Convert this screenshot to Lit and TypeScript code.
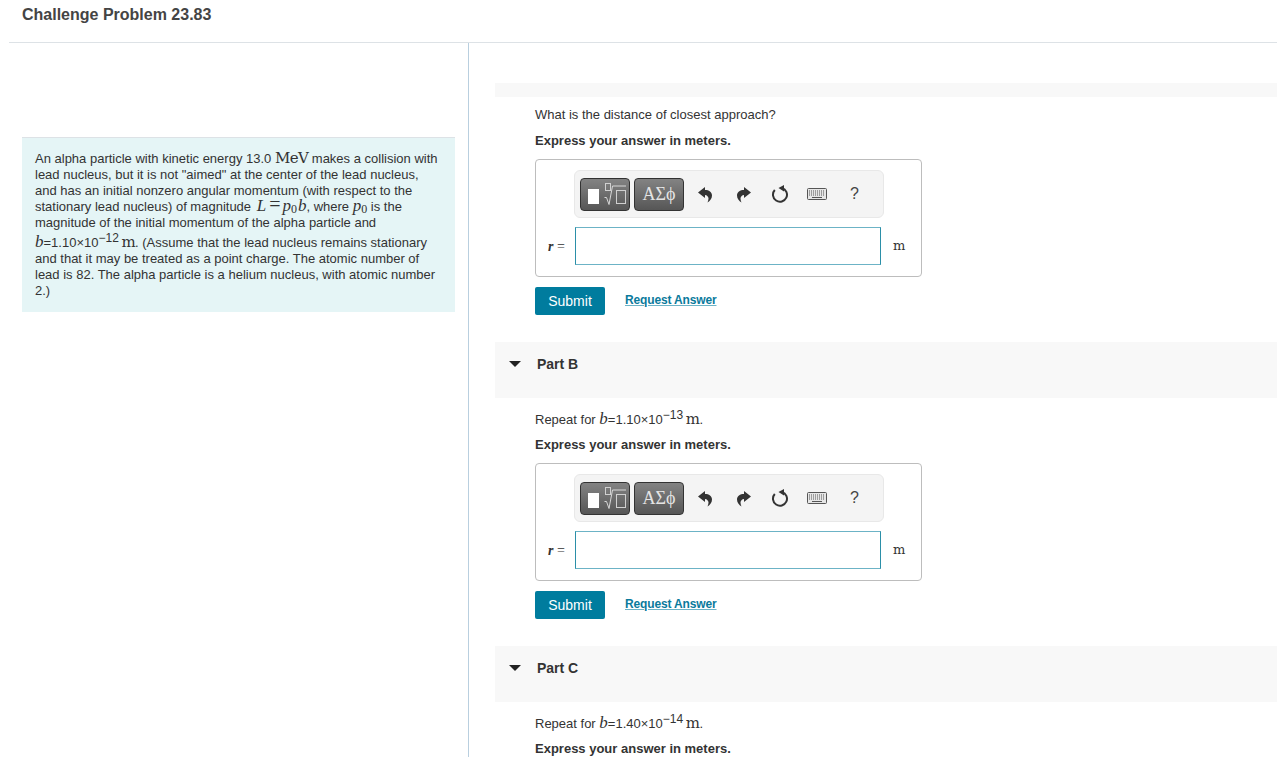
import { LitElement, html, css, svg } from "lit";
import { customElement } from "lit/decorators.js";

const tri = svg`<path d="M0 0H12L6 6Z" fill="#222"/>`;

@customElement("app-root")
export class AppRoot extends LitElement {
  static styles = css`
    :host { display: block; width: 1277px; height: 757px; overflow: hidden; background: #fff; font-family: "Liberation Sans", Arial, sans-serif; color: #333; font-size: 13px; }
    .head { height: 42px; margin-left: 9px; border-bottom: 1px solid #dde2e6; box-sizing: content-box; }
    .head h1 { margin: 0; padding: 5px 0 0 13px; font-size: 16px; line-height: 19px; font-weight: 700; color: #444; }
    .cols { display: flex; height: 714px; }
    .left { width: 459px; margin-left: 9px; border-right: 1px solid #b9cfdf; box-sizing: content-box; padding-top: 94px; }
    .info { margin-left: 13px; width: 433px; height: 175px; box-sizing: border-box; background: #e5f5f6; border-top: 1px solid #dde2e6; padding: 13px 0 0 13px; font-size: 13px; line-height: 16px; color: #333; white-space: nowrap; }
    .eq { font-family: "Liberation Serif", serif; font-size: 20px; line-height: 0; margin: 0 2px 0 3px; }
    .mv { font-family: "DejaVu Serif", serif; font-size: 15px; letter-spacing: -0.6px; line-height: 0; }
    .um { margin-left: -1px; }
    .i { font-style: italic; font-family: "Liberation Serif", serif; font-size: 17px; line-height: 0; }
    .L { margin-left: 2px; }
    .b2 { margin-left: 1px; }
    sup { font-size: 12px; line-height: 0; vertical-align: 5px; }
    sub { font-family: "Liberation Serif", serif; font-size: 12px; line-height: 0; vertical-align: -2px; }
    .sp { display: block; height: 20px; line-height: 21px; padding-top: 1px; margin-bottom: -1px; }
    .right { flex: 1; padding: 40px 0 0 26px; min-width: 0; }
    .topbar { height: 14px; background: #f8f8f8; }
    .body { padding-left: 40px; }
    .q { height: 18px; line-height: 20px; margin-top: 8px; color: #333; }
    .ex { height: 18px; line-height: 20px; margin-top: 8px; font-weight: 700; }
    .box { width: 387px; height: 118px; box-sizing: border-box; margin-top: 10px; border: 1px solid #bdbdbd; border-radius: 4px; padding-top: 10px; }
    .tools { display: flex; align-items: center; width: 310px; height: 48px; box-sizing: border-box; margin-left: 38px; background: #f4f4f4; border: 1px solid #e8e8e8; border-radius: 6px; padding-left: 5px; }
    .btn { width: 50px; height: 33px; box-sizing: border-box; border: 1px solid #333; border-radius: 4px; background: linear-gradient(#838383, #565656); margin-right: 4px; display: flex; align-items: center; justify-content: center; color: #e4e4e4; font-family: "Liberation Serif", serif; font-size: 18px; flex: none; }
    .tools svg { display: block; flex: none; }
    .ic { width: 37px; display: flex; justify-content: center; color: #333; flex: none; }
    .undo { margin-left: -2px; }
    .redo { margin-left: 2px; }
    .redo2 { margin-left: -1px; }
    .help { font-size: 16px; color: #444; margin-left: 1px; }
    .row { display: flex; align-items: center; margin-top: 9px; height: 38px; }
    .lab { width: 39px; padding: 2px 0 0 12px; box-sizing: border-box; font-family: "Liberation Serif", serif; font-size: 14px; white-space: nowrap; }
    .lab i { font-weight: 700; }
    .inp { width: 306px; height: 38px; box-sizing: border-box; border: 1px solid #2b8fa8; border-top-color: #6cb3c6; border-bottom-color: #6cb3c6; background: #fff; }
    .unit { margin-left: 12px; font-family: "DejaVu Serif", serif; font-size: 13px; letter-spacing: -0.2px; margin-top: -1px; }
    .acts { display: flex; align-items: center; margin-top: 10px; height: 28px; }
    .submit { width: 70px; height: 28px; box-sizing: border-box; display: flex; align-items: center; justify-content: center; border: 0; background: #007c9e; border-radius: 2px; color: #fff; font: 14px "Liberation Sans", Arial, sans-serif; }
    .req { margin-left: 20px; margin-top: -3px; font-size: 12px; font-weight: 700; letter-spacing: -0.15px; color: #0a7a9c; text-decoration: underline; text-decoration-color: #6cb3c6; }
    .part { display: flex; height: 56px; box-sizing: border-box; background: #f8f8f8; margin-top: 27px; padding: 14px 0 0 14px; }
    .part svg { display: block; margin-top: 5px; flex: none; }
    .part b { margin-left: 16px; line-height: 16px; color: #333; font-size: 14px; }
    .rep { margin-top: 12px; height: 17px; line-height: 20px; }
  `;

  private answer() {
    return html`
      <div class="box">
        <div class="tools">
          <div class="btn">
            <svg width="46" height="28" viewBox="0 0 46 28">
              <rect x="6" y="9" width="11" height="15" fill="#fff"/>
              <rect x="23.500" y="3.500" width="5" height="7" fill="none" stroke="#d0d0d0"/>
              <path d="M22.500 17.500l2 0 2.500 7 3.500-18.500H44" fill="none" stroke="#d8d8d8"/>
              <rect x="34.500" y="10.500" width="9" height="13" fill="none" stroke="#d0d0d0"/>
            </svg>
          </div>
          <div class="btn">ΑΣϕ</div>
          <div class="ic undo">
            <svg width="16" height="17" viewBox="0 0 16 17"><path d="M8 1L1 6.500 8 12V9C10 9 11 10.500 11.500 12C11.500 14 11 15 10.500 16.500C13 15 15 12.500 15 9.500C15 6 12 4 8 4Z" fill="#333"/></svg>
          </div>
          <div class="ic redo">
            <svg width="16" height="17" viewBox="0 0 16 17"><path d="M8 1L15 6.500 8 12V9C6 9 5 10.500 4.500 12C4.500 14 5 15 5.500 16.500C3 15 1 12.500 1 9.500C1 6 4 4 8 4Z" fill="#333"/></svg>
          </div>
          <div class="ic redo2">
            <svg width="18" height="18" viewBox="0 0 18 18"><path d="M3.800 5A7 7 0 1 0 11 3" fill="none" stroke="#333" stroke-width="2"/><path d="M7.500 3L13 0V6.500Z" fill="#333"/></svg>
          </div>
          <div class="ic">
            <svg width="20" height="12" viewBox="0 0 20 12"><rect x="0.500" y="0.500" width="19" height="11" rx="1" fill="#e6e6e6" stroke="#555"/><path d="M2 3H18M2 5H18M2 7H18" stroke="#555" stroke-dasharray="1 1" fill="none"/><path d="M5 9.500H15" stroke="#555" fill="none"/></svg>
          </div>
          <div class="ic help">?</div>
        </div>
        <div class="row">
          <div class="lab"><i>r</i> =</div>
          <div class="inp"></div>
          <div class="unit">m</div>
        </div>
      </div>
      <div class="acts">
        <div class="submit">Submit</div>
        <div class="req">Request Answer</div>
      </div>
    `;
  }

  render() {
    return html`
      <div class="head"><h1>Challenge Problem 23.83</h1></div>
      <div class="cols">
        <div class="left">
          <div class="info">
            An alpha particle with kinetic energy 13.0 <span class="mv">MeV</span> makes a collision with<br>
            lead nucleus, but it is not "aimed" at the center of the lead nucleus,<br>
            and has an initial nonzero angular momentum (with respect to the<br>
            stationary lead nucleus) of magnitude <span class="i L">L</span><span class="eq">=</span><span class="i">p</span><sub>0</sub><span class="i b2">b</span>, where <span class="i">p</span><sub>0</sub> is the<br>
            magnitude of the initial momentum of the alpha particle and
            <span class="sp"><span class="i">b</span>=1.10×10<sup>−12</sup> <span class="mv um">m</span>. (Assume that the lead nucleus remains stationary</span>
            and that it may be treated as a point charge. The atomic number of<br>
            lead is 82. The alpha particle is a helium nucleus, with atomic number<br>
            2.)
          </div>
        </div>
        <div class="right">
          <div class="topbar"></div>
          <div class="body">
            <div class="q">What is the distance of closest approach?</div>
            <div class="ex">Express your answer in meters.</div>
            ${this.answer()}
          </div>
          <div class="part"><svg width="12" height="6" viewBox="0 0 12 6">${tri}</svg><b>Part B</b></div>
          <div class="body">
            <div class="rep">Repeat for <span class="i">b</span>=1.10×10<sup>−13</sup> <span class="mv um">m</span>.</div>
            <div class="ex">Express your answer in meters.</div>
            ${this.answer()}
          </div>
          <div class="part"><svg width="12" height="6" viewBox="0 0 12 6">${tri}</svg><b>Part C</b></div>
          <div class="body">
            <div class="rep">Repeat for <span class="i">b</span>=1.40×10<sup>−14</sup> <span class="mv um">m</span>.</div>
            <div class="ex">Express your answer in meters.</div>
          </div>
        </div>
      </div>
    `;
  }
}
